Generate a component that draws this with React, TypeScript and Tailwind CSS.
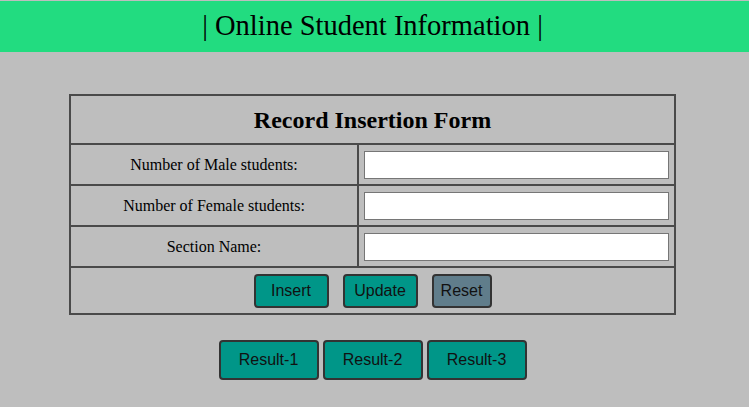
export default function App() {
  const serif = { fontFamily: '"Liberation Serif", "Times New Roman", serif' };
  const rows = ["Number of Male students:", "Number of Female students:", "Section Name:"];
  return (
    <div className="min-h-screen w-full bg-[#bebebe] pt-px" style={serif}>
      <div className="flex h-[51px] items-center justify-center bg-[#22dc80] pr-[4px]">
        <h1 className="text-[28.5px] leading-none text-black">| Online Student Information |</h1>
      </div>

      <div className="mt-[42px] flex justify-center pr-[4px]">
        <table className="w-[607px] border-collapse border-2 border-[#4a4a4a]">
          <tbody>
            <tr className="h-[49px]">
              <th colSpan={2} className="border-2 border-[#4a4a4a] text-[24px] font-bold text-black">
                Record Insertion Form
              </th>
            </tr>
            {rows.map((label) => (
              <tr key={label} className="h-[41px]">
                <td className="w-[288px] border-2 border-[#4a4a4a] text-center text-[16px] text-black">{label}</td>
                <td className="border-2 border-[#4a4a4a] px-[5px]">
                  <input
                    type="text"
                    className="block h-[28px] w-full border border-[#767676] bg-white px-1 outline-none"
                  />
                </td>
              </tr>
            ))}
            <tr className="h-[47px]">
              <td colSpan={2} className="border-2 border-[#4a4a4a]">
                <div className="flex items-center justify-center gap-[14px]" style={{ fontFamily: '"Liberation Sans", Arial, sans-serif' }}>
                  <button className="h-[34px] w-[75px] rounded-[4px] border-2 border-[#333] bg-[#009688] text-[16px] text-[#111]">
                    Insert
                  </button>
                  <button className="h-[34px] w-[75px] rounded-[4px] border-2 border-[#333] bg-[#009688] text-[16px] text-[#111]">
                    Update
                  </button>
                  <button className="h-[34px] w-[60px] rounded-[4px] border-2 border-[#333] bg-[#607d8b] text-[16px] text-[#111]">
                    Reset
                  </button>
                </div>
              </td>
            </tr>
          </tbody>
        </table>
      </div>

      <div className="mt-[25px] flex justify-center gap-[4px] pr-[4px]" style={{ fontFamily: '"Liberation Sans", Arial, sans-serif' }}>
        <button className="h-[40px] w-[100px] rounded-[4px] border-2 border-[#333] bg-[#009688] text-[16px] text-[#111]">
          Result-1
        </button>
        <button className="h-[40px] w-[100px] rounded-[4px] border-2 border-[#333] bg-[#009688] text-[16px] text-[#111]">
          Result-2
        </button>
        <button className="h-[40px] w-[100px] rounded-[4px] border-2 border-[#333] bg-[#009688] text-[16px] text-[#111]">
          Result-3
        </button>
      </div>
    </div>
  );
}
